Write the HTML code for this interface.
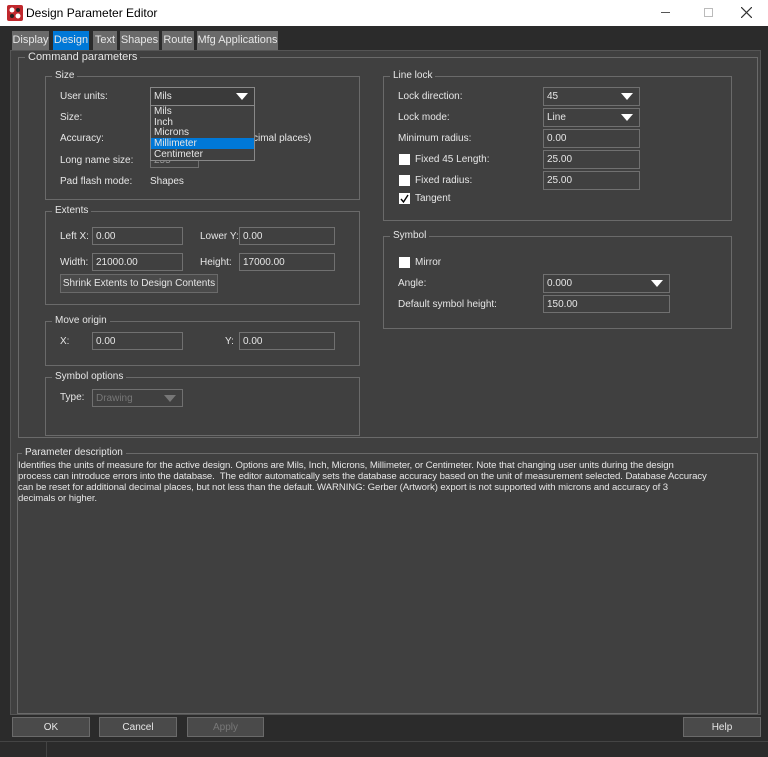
<!DOCTYPE html>
<html><head><style>
*{margin:0;padding:0;box-sizing:border-box}
body{width:768px;height:757px;background:#2b2b2b;font-family:"Liberation Sans",sans-serif;font-size:10px;color:#e6e6e6;position:relative;overflow:hidden}
.a{position:absolute}
.t{position:absolute;white-space:nowrap;line-height:12px}
.g{position:absolute;border:1px solid #6a6a6a}
.gl{position:absolute;top:-7px;left:6px;background:#404040;padding:0 3px;line-height:12px;white-space:nowrap}
.in{position:absolute;border:1px solid #707070;background:#404040;padding-left:3px;white-space:nowrap;display:flex;align-items:center}
.arr{position:absolute;right:6px;top:5px;width:0;height:0;border-left:6px solid transparent;border-right:6px solid transparent;border-top:7px solid #fff}
.cb{position:absolute;width:11px;height:11px;background:#fff}
.btn{position:absolute;border:1px solid #6a6a6a;background:#4a4a4a;display:flex;align-items:center;justify-content:center}
.tab{position:absolute;top:31px;height:19px;background:#6a6a6a;line-height:19px;text-align:center;font-size:11px}
</style></head><body>
<div class="a" style="left:0;top:0;width:768px;height:26px;background:#fff"></div>
<svg class="a" style="left:7px;top:5px" width="16" height="16"><rect width="16" height="16" rx="2" fill="#c0282d"/><circle cx="5" cy="5" r="2.5" fill="#fff"/><circle cx="11" cy="11" r="2.5" fill="#fff"/><circle cx="5" cy="11" r="2" fill="#222"/><circle cx="11" cy="5" r="2" fill="#222"/></svg>
<div class="t" style="left:26px;top:7px;color:#000;font-size:12px">Design Parameter Editor</div>
<div class="a" style="left:661px;top:12px;width:9px;height:1px;background:#555"></div>
<div class="a" style="left:704px;top:8px;width:9px;height:9px;border:1px solid #bbb"></div>
<svg class="a" style="left:741px;top:7px" width="11" height="11"><path d="M0 0L11 11M11 0L0 11" stroke="#333" stroke-width="1.2"/></svg>

<div class="tab" style="left:12px;width:37px">Display</div>
<div class="tab" style="left:53px;width:36px;background:#0078d7">Design</div>
<div class="tab" style="left:93px;width:24px">Text</div>
<div class="tab" style="left:120px;width:39px">Shapes</div>
<div class="tab" style="left:162px;width:32px">Route</div>
<div class="tab" style="left:197px;width:81px">Mfg Applications</div>

<div class="a" style="left:10px;top:50px;width:751px;height:665px;background:#404040;border:1px solid #555"></div>
<div class="g" style="left:18px;top:57px;width:740px;height:381px"><div class="gl" style="font-size:11px">Command parameters</div></div>

<div class="g" style="left:45px;top:76px;width:315px;height:124px"><div class="gl">Size</div></div>
<div class="t" style="left:60px;top:91px">User units:</div>
<div class="t" style="left:60px;top:112px">Size:</div>
<div class="t" style="left:60px;top:133px">Accuracy:</div>
<div class="t" style="left:253px;top:133px">cimal places)</div>
<div class="t" style="left:60px;top:155px">Long name size:</div>
<div class="in" style="left:150px;top:152px;width:49px;height:16px;color:#999">255</div>
<div class="t" style="left:60px;top:176px">Pad flash mode:</div>
<div class="t" style="left:150px;top:176px">Shapes</div>

<div class="g" style="left:45px;top:211px;width:315px;height:94px"><div class="gl">Extents</div></div>
<div class="t" style="left:60px;top:231px">Left X:</div>
<div class="in" style="left:92px;top:227px;width:91px;height:18px">0.00</div>
<div class="t" style="left:200px;top:231px">Lower Y:</div>
<div class="in" style="left:239px;top:227px;width:96px;height:18px">0.00</div>
<div class="t" style="left:60px;top:257px">Width:</div>
<div class="in" style="left:92px;top:253px;width:91px;height:18px">21000.00</div>
<div class="t" style="left:200px;top:257px">Height:</div>
<div class="in" style="left:239px;top:253px;width:96px;height:18px">17000.00</div>
<div class="btn" style="left:60px;top:274px;width:158px;height:19px">Shrink Extents to Design Contents</div>

<div class="g" style="left:45px;top:321px;width:315px;height:45px"><div class="gl">Move origin</div></div>
<div class="t" style="left:60px;top:336px">X:</div>
<div class="in" style="left:92px;top:332px;width:91px;height:18px">0.00</div>
<div class="t" style="left:225px;top:336px">Y:</div>
<div class="in" style="left:239px;top:332px;width:96px;height:18px">0.00</div>

<div class="g" style="left:45px;top:377px;width:315px;height:59px"><div class="gl">Symbol options</div></div>
<div class="t" style="left:60px;top:392px">Type:</div>
<div class="in" style="left:92px;top:389px;width:91px;height:18px;color:#777">Drawing<div class="arr" style="border-top-color:#777"></div></div>

<div class="g" style="left:383px;top:76px;width:349px;height:145px"><div class="gl">Line lock</div></div>
<div class="t" style="left:398px;top:91px">Lock direction:</div>
<div class="in" style="left:543px;top:87px;width:97px;height:19px">45<div class="arr"></div></div>
<div class="t" style="left:398px;top:112px">Lock mode:</div>
<div class="in" style="left:543px;top:108px;width:97px;height:19px">Line<div class="arr"></div></div>
<div class="t" style="left:398px;top:133px">Minimum radius:</div>
<div class="in" style="left:543px;top:129px;width:97px;height:19px">0.00</div>
<div class="cb" style="left:399px;top:154px"></div>
<div class="t" style="left:415px;top:154px">Fixed 45 Length:</div>
<div class="in" style="left:543px;top:150px;width:97px;height:19px">25.00</div>
<div class="cb" style="left:399px;top:175px"></div>
<div class="t" style="left:415px;top:175px">Fixed radius:</div>
<div class="in" style="left:543px;top:171px;width:97px;height:19px">25.00</div>
<div class="cb" style="left:399px;top:193px"><svg width="11" height="11" style="display:block"><path d="M2 6L4.5 9L9 2" stroke="#000" stroke-width="1.4" fill="none"/></svg></div>
<div class="t" style="left:415px;top:193px">Tangent</div>

<div class="g" style="left:383px;top:236px;width:349px;height:93px"><div class="gl">Symbol</div></div>
<div class="cb" style="left:399px;top:257px"></div>
<div class="t" style="left:415px;top:257px">Mirror</div>
<div class="t" style="left:398px;top:278px">Angle:</div>
<div class="in" style="left:543px;top:274px;width:127px;height:19px">0.000<div class="arr"></div></div>
<div class="t" style="left:398px;top:299px">Default symbol height:</div>
<div class="in" style="left:543px;top:295px;width:127px;height:18px">150.00</div>

<div class="in" style="left:150px;top:87px;width:105px;height:19px;background:#3a3a3a;border-color:#888">Mils<div class="arr"></div></div>
<div class="a" style="left:150px;top:105px;width:105px;height:56px;background:#404040;border:1px solid #888"></div>
<div class="t" style="left:154px;top:106px">Mils</div>
<div class="t" style="left:154px;top:117px">Inch</div>
<div class="t" style="left:154px;top:127px">Microns</div>
<div class="a" style="left:151px;top:138px;width:103px;height:11px;background:#0078d7"></div>
<div class="t" style="left:154px;top:138px">Millimeter</div>
<div class="t" style="left:154px;top:149px">Centimeter</div>

<div class="g" style="left:17px;top:453px;width:741px;height:261px"><div class="gl" style="left:4px">Parameter description</div></div>
<div class="a" style="left:18px;top:460px;white-space:nowrap;line-height:11px;font-size:9.6px;letter-spacing:-0.08px">Identifies the units of measure for the active design. Options are Mils, Inch, Microns, Millimeter, or Centimeter. Note that changing user units during the design<br>process can introduce errors into the database.&nbsp; The editor automatically sets the database accuracy based on the unit of measurement selected. Database Accuracy<br>can be reset for additional decimal places, but not less than the default. WARNING: Gerber (Artwork) export is not supported with microns and accuracy of 3<br>decimals or higher.</div>

<div class="btn" style="left:12px;top:717px;width:78px;height:20px">OK</div>
<div class="btn" style="left:99px;top:717px;width:78px;height:20px">Cancel</div>
<div class="btn" style="left:187px;top:717px;width:77px;height:20px;color:#777">Apply</div>
<div class="btn" style="left:683px;top:717px;width:78px;height:20px">Help</div>
<div class="a" style="left:0;top:741px;width:768px;height:1px;background:#444"></div>
<div class="a" style="left:46px;top:742px;width:1px;height:15px;background:#444"></div>
</body></html>
